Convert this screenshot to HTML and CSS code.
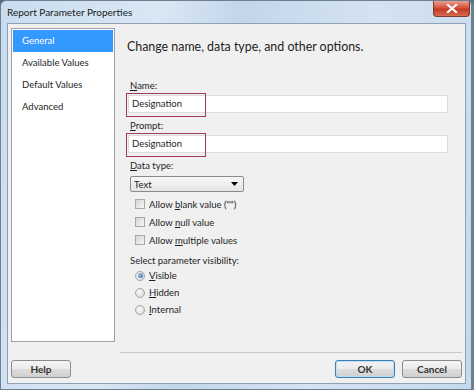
FILE: index.html
```html
<!DOCTYPE html>
<html>
<head>
<meta charset="utf-8">
<link rel="stylesheet" href="styles.css">
</head>
<body>
<div class="window">
  <div class="titlebar">
    <span class="title">Report Parameter Properties</span>
    <span class="close"><svg width="12" height="9" viewBox="0 0 12 9"><path d="M2 1 L10 8 M10 1 L2 8" stroke="#fff" stroke-width="2.2" stroke-linecap="square"/></svg></span>
  </div>
  <div class="client">
    <div class="main">
      <ul class="nav">
        <li class="sel">General</li>
        <li>Available Values</li>
        <li>Default Values</li>
        <li>Advanced</li>
      </ul>
      <div class="panel">
        <h1 class="heading">Change name, data type, and other options.</h1>
        <div class="label l-name"><u>N</u>ame:</div>
        <div class="field"><span class="hl"></span><span class="val">Designation</span></div>
        <div class="label l-prompt"><u>P</u>rompt:</div>
        <div class="field"><span class="hl"></span><span class="val">Designation</span></div>
        <div class="label l-type"><u>D</u>ata type:</div>
        <div class="select"><span>Text</span><svg width="7" height="4" viewBox="0 0 7 4"><path d="M0 0 H7 L3.5 4 Z" fill="#000"/></svg></div>
        <div class="checks">
          <div class="opt"><span class="cb"></span><span>Allow <u>b</u>lank value ("")</span></div>
          <div class="opt"><span class="cb"></span><span>Allow <u>n</u>ull value</span></div>
          <div class="opt"><span class="cb"></span><span>Allow <u>m</u>ultiple values</span></div>
        </div>
        <div class="label l-vis">Select parameter visibility:</div>
        <div class="radios">
          <div class="opt"><span class="rb on"></span><span><u>V</u>isible</span></div>
          <div class="opt"><span class="rb"></span><span><u>H</u>idden</span></div>
          <div class="opt"><span class="rb"></span><span><u>I</u>nternal</span></div>
        </div>
      </div>
    </div>
    <div class="footer">
      <button class="btn">Help</button>
      <div class="right">
        <button class="btn ok">OK</button>
        <button class="btn">Cancel</button>
      </div>
    </div>
  </div>
</div>
</body>
</html>
```
FILE: styles.css
```css
* { box-sizing: border-box; }
html, body { margin: 0; padding: 0; }
body {
  width: 474px; height: 390px; overflow: hidden;
  font-family: "Lato", "Open Sans", sans-serif;
  font-size: 9.5px; color: #1e1e1e;
  background: #5a6a7a;
}
.window {
  width: 474px; height: 390px;
  display: flex; flex-direction: column;
  background: linear-gradient(100deg, #c9dcef 0%, #d9e7f4 30%, #c3d6ea 45%, #d4e3f2 70%, #c6d9ec 100%);
  border-radius: 6px 6px 0 0;
  border: 1px solid #6e7f90;
  border-right-width: 3px;
  padding: 0 0 5px 0;
}
.titlebar {
  height: 23px; display: flex; align-items: center; justify-content: space-between;
  padding-left: 6px;
}
.title { font-size: 10px; color: #1a1a1a; }
.close {
  align-self: flex-start; width: 37px; height: 16px; margin-right: 1px;
  background: linear-gradient(#e8a090 0%, #d5533a 45%, #c23a22 55%, #d86a50 100%);
  border: 1px solid #7a3a30; border-top: none;
  border-radius: 0 0 4px 4px;
  display: flex; align-items: center; justify-content: center;
}
.client {
  flex: 1; margin: 0 5px 0 6px;
  background: #f0f0f0;
  border: 1px solid #8da2b8;
  display: flex; flex-direction: column;
  padding: 4px 3px 5px 3px;
}
.main { flex: 1; display: flex; }
.nav {
  list-style: none; margin: 0; padding: 1px;
  width: 104px; height: 314px;
  background: #fff; border: 1px solid #a0a0a0;
}
.nav li { height: 22px; line-height: 22px; padding-left: 9px; color: #1e1e1e; }
.nav li.sel { background: #3399ff; color: #fff; }
.panel {
  flex: 1; margin-left: 5px; padding-left: 7px; position: relative;
  border-bottom: 1px solid #c8c8c8; height: 325px;
}
.heading {
  font-weight: normal; font-size: 12.4px; margin: 10px 0 0 0; color: #1e1e1e;
  line-height: 18px;
}
.label { margin-left: 3px; line-height: 13px; }
.l-name { margin-top: 23px; }
.l-prompt { margin-top: 6px; }
.l-type { margin-top: 6px; }
.field {
  position: relative; height: 18px; margin: 3px 0 0 1px; width: 320px;
  background: #fff; border: 1px solid #dcdcdc;
}
.field .val { position: absolute; left: 3px; top: 1px; line-height: 14px; }
.hl {
  position: absolute; left: -3px; top: -3px; width: 80px; height: 24px;
  border: 1.5px solid #9e3d56;
}
.select {
  margin: 4px 0 0 3px; width: 114px; height: 16px;
  border: 1px solid #8a8a8a; border-radius: 2px;
  background: linear-gradient(#f8f8f8, #e4e4e4);
  display: flex; align-items: center; justify-content: space-between;
  padding: 0 5px 0 3px;
}
.checks { margin-top: 3px; }
.opt { display: flex; align-items: center; height: 18px; padding-left: 8px; }
.cb {
  width: 10px; height: 10px; margin-right: 4px;
  border: 1px solid #a8a8a8;
  background: linear-gradient(135deg, #d4d4d4, #f6f6f6);
}
.l-vis { margin-top: 5px; }
.radios { margin-top: 0; }
.radios .opt { height: 17px; }
.rb {
  width: 10px; height: 10px; margin-right: 4px; border-radius: 50%;
  border: 1px solid #a4a4a4;
  background: radial-gradient(circle at 40% 40%, #fafafa, #d4d4d4);
  position: relative;
}
.rb.on::after {
  content: ""; position: absolute; left: 1.5px; top: 1.5px; width: 5px; height: 5px; border-radius: 50%;
  background: radial-gradient(circle at 40% 35%, #8fc3ea, #2a6aa8);
}
.footer {
  display: flex; justify-content: space-between; align-items: center;
  padding-top: 7px;
}
.right { display: flex; gap: 7px; }
.btn {
  width: 60px; height: 18px; padding: 0;
  font-family: inherit; font-size: 10px; font-weight: bold; color: #333;
  border: 1px solid #8c8c8c; border-radius: 3px;
  background: linear-gradient(#f4f4f4 0%, #ebebeb 50%, #dddddd 51%, #d0d0d0 100%);
}
.btn.ok { border-color: #3c7fb1; box-shadow: inset 0 0 0 1px #b8e0f6; }
```
